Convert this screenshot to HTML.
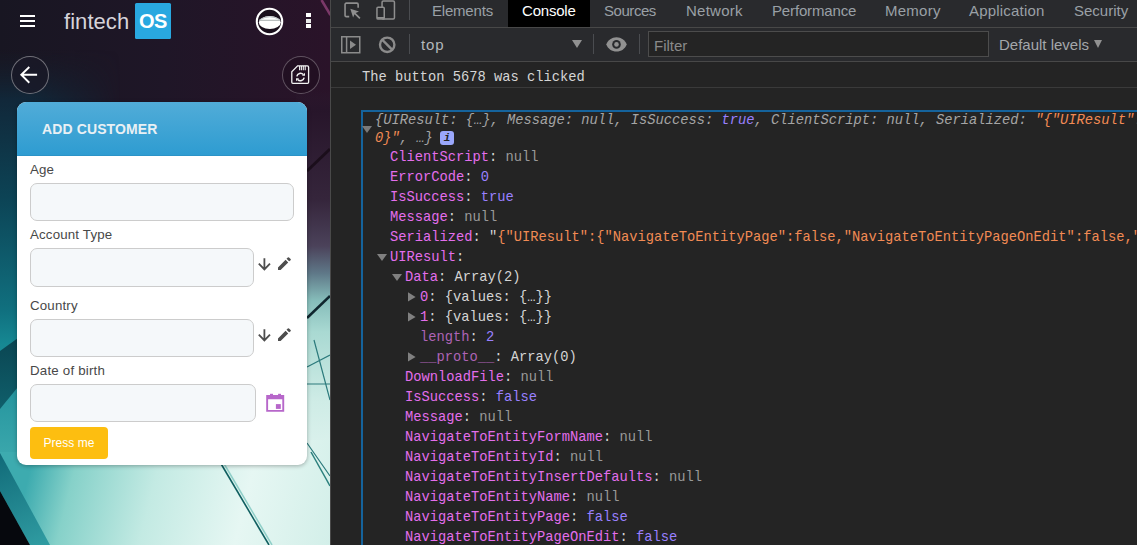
<!DOCTYPE html>
<html lang="en">
<head>
<meta charset="utf-8">
<title>Add Customer</title>
<style>
*{box-sizing:border-box;margin:0;padding:0}
html,body{width:1137px;height:545px;overflow:hidden;background:#242424}
body{position:relative;font-family:"Liberation Sans",sans-serif}
#app{position:absolute;left:0;top:0;width:330px;height:545px;overflow:hidden;background:#1b1622}
#bg{position:absolute;left:0;top:0}
.abs{position:absolute}
#logo-text{position:absolute;left:64px;top:9px;font-size:22px;color:#d6d3da;letter-spacing:.05px;line-height:26px}
#logo-os{position:absolute;left:135px;top:3px;width:36px;height:36px;border-radius:1.5px;background:#29a8e0;color:#fff;font-weight:bold;font-size:20px;letter-spacing:-.5px;line-height:37px;text-align:center}
.circ{position:absolute;width:38px;height:38px;border-radius:50%;border:1px solid rgba(255,255,255,.38);background:rgba(26,24,38,.7)}
#card{position:absolute;left:17px;top:102px;width:290px;height:363px;background:#fff;border-radius:9px;box-shadow:0 1px 4px rgba(0,0,0,.3);overflow:hidden}
#card-h{position:absolute;left:0;top:0;width:290px;height:54px;background:linear-gradient(#51acd8,#2e9cd1);border-bottom:1px solid #2b93c7;}
#card-h span{position:absolute;left:25px;top:19px;font-size:14px;font-weight:bold;color:#e9f0f4;letter-spacing:.12px;line-height:16px}
.lbl{position:absolute;left:13px;font-size:13.3px;letter-spacing:.17px;color:#484848;line-height:16px;white-space:nowrap}
.inp{position:absolute;left:13px;background:#f5f8fa;border:1px solid #ccc;border-radius:7px}
#btn{position:absolute;left:13px;top:325px;width:78px;height:32px;background:#fdbe10;border-radius:4px;color:#fff;font-size:12px;letter-spacing:.05px;line-height:32px;text-align:center}
#dt{position:absolute;left:332px;top:0;width:805px;height:545px;background:#242424}
#vb{position:absolute;left:330px;top:0;width:1px;height:545px;background:#494949}
#tabs{position:absolute;left:-1px;top:0;width:806px;height:28px;background:#292a2d;border-bottom:1px solid #484848}
#tabs>*,#tb2>*{margin-left:1px}
.tab{position:absolute;top:0;height:27px;line-height:22px;font-size:15px;letter-spacing:-.35px;color:#9aa0a6;white-space:nowrap}
#tb2{position:absolute;left:-1px;top:28px;width:806px;height:34px;background:#292a2d;border-bottom:1px solid #484848}
.mono{font-family:"Liberation Mono",monospace;font-size:13.75px;white-space:pre;position:absolute;line-height:20px;color:#d5d5d5}
.k{color:#e36eec}.kd{color:#ad63b5}.n{color:#9980ff}.z{color:#999}.s{color:#f28b54}
.it{font-style:italic;color:#a5a5a5}
.tt{font-size:15px;line-height:20px;white-space:nowrap}
</style>
</head>
<body>
<div id="app">
<svg id="bg" width="330" height="545" viewBox="0 0 330 545">
<defs>
<linearGradient id="g1" x1="0" y1="0" x2="1" y2="0"><stop offset="0" stop-color="#181622"/><stop offset=".5" stop-color="#1f1627"/><stop offset="1" stop-color="#2a1329"/></linearGradient>
<linearGradient id="gl" gradientUnits="userSpaceOnUse" x1="0" y1="50" x2="0" y2="470"><stop offset="0" stop-color="#16202e" stop-opacity="0"/><stop offset=".12" stop-color="#11283a"/><stop offset=".35" stop-color="#0c4355"/><stop offset=".62" stop-color="#10707f"/><stop offset=".7" stop-color="#168893"/><stop offset=".85" stop-color="#2b9aa2"/><stop offset="1" stop-color="#3fabaf"/></linearGradient>
<linearGradient id="glm" x1="0" y1="0" x2="1" y2="0"><stop offset="0" stop-color="#fff"/><stop offset=".25" stop-color="#fff"/><stop offset="1" stop-color="#000"/></linearGradient>
<mask id="ml"><rect x="0" y="40" width="120" height="505" fill="url(#glm)"/></mask>
<linearGradient id="gr" gradientUnits="userSpaceOnUse" x1="0" y1="90" x2="0" y2="480"><stop offset="0" stop-color="#2b1a2e" stop-opacity="0"/><stop offset=".05" stop-color="#27152a"/><stop offset=".28" stop-color="#35253b"/><stop offset=".4" stop-color="#4b425a"/><stop offset=".47" stop-color="#5f7888"/><stop offset=".54" stop-color="#86bdba"/><stop offset=".62" stop-color="#a9d9d2"/><stop offset=".8" stop-color="#cfece6"/><stop offset="1" stop-color="#e3f5f1"/></linearGradient>
<linearGradient id="gb" gradientUnits="userSpaceOnUse" x1="30" y1="470" x2="330" y2="545"><stop offset="0" stop-color="#3dabaf"/><stop offset=".14" stop-color="#86d1c9"/><stop offset=".4" stop-color="#c3eae3"/><stop offset=".7" stop-color="#e6f7f3"/><stop offset="1" stop-color="#d3efe9"/></linearGradient>
<linearGradient id="gdk" x1="0" y1="0" x2="0" y2="1"><stop offset="0" stop-color="#093f4c"/><stop offset="1" stop-color="#0f5f6b"/></linearGradient>
<linearGradient id="gband" gradientUnits="userSpaceOnUse" x1="0" y1="455" x2="40" y2="545"><stop offset="0" stop-color="#116b79"/><stop offset="1" stop-color="#2f9ba1"/></linearGradient>
</defs>
<rect width="330" height="545" fill="url(#g1)"/>
<rect x="0" y="40" width="120" height="505" fill="url(#gl)" mask="url(#ml)"/>
<polygon points="0,351 40,322 40,360 0,409" fill="url(#gdk)"/>
<rect x="296" y="90" width="34" height="455" fill="url(#gr)"/>
<polygon points="0,452 310,452 310,440 330,440 330,545 0,545" fill="url(#gb)"/>
<polygon points="0,453 0,491 30,545 50,545" fill="url(#gband)"/>
<polygon points="0,491 0,545 30,545" fill="#06080d"/>
<path d="M220 462L269 545" stroke="#0f5f60" stroke-width="1.600"/><path d="M223 462L272 545" stroke="#8fcfc8" stroke-width="1.500"/>
<path d="M311 452L330 486" stroke="#2a7f7c" stroke-width="1.500"/>
<path d="M307 171L330 149" stroke="#170b16" stroke-width="3" opacity=".8"/>
<path d="M307 318L330 296" stroke="#10262e" stroke-width="2.500"/>
<path d="M307 367L330 355M307 384L330 384M314 340L330 400M307 443L330 476" stroke="#2c7a7c" stroke-width="1.200" fill="none"/>
<path d="M321.500 0L330.500 15" stroke="#a64c8a" stroke-width="2.600" opacity=".65"/>
</svg>
<div class="abs" style="left:20px;top:15px;width:15px;height:2px;background:#fff"></div>
<div class="abs" style="left:20px;top:20px;width:15px;height:2px;background:#fff"></div>
<div class="abs" style="left:20px;top:25px;width:15px;height:2px;background:#fff"></div>
<div id="logo-text">fintech</div>
<div id="logo-os">OS</div>
<svg class="abs" style="left:254px;top:6px" width="31" height="31" viewBox="0 0 31 31"><circle cx="15.5" cy="15.5" r="12.7" fill="#1a0f1c" stroke="#fff" stroke-width="2.1"/><ellipse cx="15.8" cy="16.5" rx="11" ry="6.4" fill="#fff"/><path d="M5.6 14.2 Q15.8 8.5 26 14.2 L26 13.2 Q15.800 7.200 5.600 13.200z" fill="#b9c0c4"/><path d="M5.200 14.300h21.200" stroke="#aeb4b4" stroke-width="1.1"/></svg>
<div class="abs" style="left:306px;top:13px;width:5px;height:4px;background:#fff"></div>
<div class="abs" style="left:306px;top:18.500px;width:5px;height:4px;background:#e9e9e9"></div>
<div class="abs" style="left:306px;top:24px;width:5px;height:4px;background:#fff"></div>
<div class="circ" style="left:11px;top:56px"></div>
<svg class="abs" style="left:19px;top:65px" width="20" height="20" viewBox="0 0 20 20" fill="none" stroke="#fff" stroke-width="1.9" stroke-linecap="butt"><path d="M18.100 9.800H2.600M10.300 2L2.300 9.800l8 7.900"/></svg>
<div class="circ" style="left:281.500px;top:56px;border-color:rgba(255,255,255,.28);background:rgba(30,14,30,.6)"></div>
<svg class="abs" style="left:290px;top:64px" width="21" height="21" viewBox="0 0 21 21" fill="none" stroke="#f2f2f2" stroke-width="1.3"><path d="M7.600 1.900h9.700a1.300 1.300 0 0 1 1.300 1.300v15.100a1 1 0 0 1-1 1H2.800a1 1 0 0 1-1-1V7.800z"/><path d="M9.600 2v4.300M11.400 2v4.300M13.300 2v4.300M15.200 2v4.300" stroke-width="1.100"/><path d="M6.860 12.400A3.700 3.700 0 0 1 13.300 10.600M14.140 13.600A3.700 3.700 0 0 1 7.700 15.400" stroke-width="1.500"/><path d="M11.900 11.800h3.100v-3.100z" fill="#f2f2f2" stroke="none"/><path d="M9.100 14.200h-3.100v3.100z" fill="#f2f2f2" stroke="none"/></svg>
<div id="card">
<div id="card-h"><span>ADD CUSTOMER</span></div>
<div class="lbl" style="top:60px">Age</div>
<div class="inp" style="top:81px;width:264px;height:38px"></div>
<div class="lbl" style="top:125px">Account Type</div>
<div class="inp" style="top:146px;width:224px;height:39px"></div>
<svg class="abs ic" style="left:240px;top:155px" width="14" height="14" viewBox="0 0 14 14" fill="none" stroke="#4d4d4d" stroke-width="1.800"><path d="M7.400 1.200v11.300M1.800 6.700l5.600 5.800 5.600-5.800"/></svg>
<svg class="abs ic" style="left:260px;top:155px" width="15" height="14" viewBox="0 0 15 14"><path d="M1 10.400V13h2.600l7.600-7.600-2.600-2.600zM13.600 3.200a.9.900 0 0 0 0-1.200L12 .4a.900.900 0 0 0-1.200 0L9.500 1.700l2.600 2.600z" fill="#4d4d4d"/></svg>
<div class="lbl" style="top:196px">Country</div>
<div class="inp" style="top:217px;width:224px;height:38px"></div>
<svg class="abs ic" style="left:240px;top:226px" width="14" height="14" viewBox="0 0 14 14" fill="none" stroke="#4d4d4d" stroke-width="1.800"><path d="M7.400 1.200v11.300M1.800 6.700l5.600 5.800 5.600-5.800"/></svg>
<svg class="abs ic" style="left:260px;top:226px" width="15" height="14" viewBox="0 0 15 14"><path d="M1 10.400V13h2.600l7.600-7.600-2.600-2.600zM13.600 3.200a.9.900 0 0 0 0-1.200L12 .4a.900.900 0 0 0-1.200 0L9.500 1.700l2.600 2.600z" fill="#4d4d4d"/></svg>
<div class="lbl" style="top:261px;letter-spacing:.2px">Date of birth</div>
<div class="inp" style="top:282px;width:226px;height:38px"></div>
<svg class="abs" style="left:249px;top:291px" width="19" height="19" viewBox="0 0 19 19"><path d="M0.200 1.900h18v16.900h-18zM2.100 6.300v10.800h14.200V6.300z" fill="#b767ca" fill-rule="evenodd"/><rect x="4" y="0.800" width="3" height="1.200" fill="#b767ca"/><rect x="12.100" y="0.800" width="2.900" height="1.200" fill="#b767ca"/><rect x="9.900" y="11.100" width="4.900" height="4.800" fill="#b767ca"/></svg>
<div id="btn">Press me</div>
</div>
</div>
<div id="vb"></div>
<div id="dt">
<div id="tabs">
<svg class="abs" style="left:11px;top:1px" width="20" height="20" viewBox="0 0 20 20" fill="none" stroke="#8f8f8f" stroke-width="1.600"><path d="M15.150 6.700V3.400a1.250 1.250 0 0 0-1.250-1.250H3.300a1.250 1.250 0 0 0-1.250 1.250v11a1.250 1.250 0 0 0 1.250 1.250H6.200"/><path d="M7.300 7.700L16 10.600 12.700 12 17.500 16.800 16.300 18 11.500 13.200 10.100 16.500z" fill="#8f8f8f" stroke="none"/></svg>
<svg class="abs" style="left:43px;top:0" width="22" height="21" viewBox="0 0 22 21" fill="none" stroke="#8f8f8f" stroke-width="1.500"><rect x="7.050" y="1.050" width="12.400" height="18" rx="1.200"/><rect x="1.950" y="7.150" width="7.300" height="11.900" rx="1.100" fill="#292a2d"/><path d="M2 17.900h7.200" stroke-width="1.800"/></svg>
<div class="abs" style="left:77px;top:0;width:1px;height:20px;background:#4a4c50"></div>
<div class="tab" style="left:100px;letter-spacing:-.2px">Elements</div>
<div class="tab" style="left:176px;width:82px;background:#000;color:#fff;padding-left:14px;letter-spacing:-.2px">Console</div>
<div class="tab" style="left:272px;letter-spacing:-.45px">Sources</div>
<div class="tab" style="left:354px;letter-spacing:.25px">Network</div>
<div class="tab" style="left:440px;letter-spacing:-.15px">Performance</div>
<div class="tab" style="left:553px;letter-spacing:.25px">Memory</div>
<div class="tab" style="left:637px;letter-spacing:.2px">Application</div>
<div class="tab" style="left:742px;letter-spacing:0">Security</div>
</div>
<div id="tb2">
<svg class="abs" style="left:9px;top:8px" width="20" height="18" viewBox="0 0 20 18" fill="none" stroke="#8b8b8b" stroke-width="1.5"><rect x="0.75" y="0.75" width="18" height="16"/><path d="M5.6 0.75v16"/><path d="M9 4.6l6 4.2-6 4.2z" fill="#8b8b8b" stroke="none"/></svg>
<svg class="abs" style="left:46px;top:8px" width="18" height="18" viewBox="0 0 18 18" fill="none" stroke="#8b8b8b" stroke-width="2.400"><circle cx="9.200" cy="8.800" r="7.200"/><path d="M4.100 3.700l10.200 10.200"/></svg>
<div class="abs" style="left:77px;top:6px;width:1px;height:20px;background:#4a4c50"></div>
<div class="abs tt" style="left:89px;top:7px;color:#b4b7bb;letter-spacing:.9px">top</div>
<svg class="abs" style="left:240px;top:12px" width="10" height="8" viewBox="0 0 10 8"><polygon points="0,0 10,0 5,8" fill="#919191"/></svg>
<div class="abs" style="left:261px;top:6px;width:1px;height:20px;background:#4a4c50"></div>
<svg class="abs" style="left:274px;top:9px" width="21" height="15" viewBox="0 0 21 15"><path d="M10.5 0.3C5.8 0.3 1.9 3.2 0.3 7.4c1.6 4.2 5.5 7.1 10.2 7.1s8.600-2.900 10.200-7.100C19.100 3.200 15.200 0.300 10.500 0.300z" fill="#919191"/><circle cx="10.500" cy="7.400" r="4.3" fill="#292a2d"/><circle cx="10.500" cy="7.400" r="2.300" fill="#919191"/></svg>
<div class="abs" style="left:307px;top:6px;width:1px;height:20px;background:#4a4c50"></div>
<div class="abs" style="left:316px;top:3px;width:341px;height:26px;background:#242424;border:1px solid #4c4c4c"></div>
<div class="abs tt" style="left:322px;top:8px;color:#8a8a8a">Filter</div>
<div class="abs tt" style="left:667px;top:7px;color:#a4a7ab">Default levels</div>
<svg class="abs" style="left:762px;top:12px" width="8" height="8" viewBox="0 0 8 8"><polygon points="0,0 8,0 4,8" fill="#919191"/></svg>
</div>
<div class="abs" style="left:-1px;top:87px;width:806px;height:1px;background:#3a3a3a"></div>
<div class="mono" style="left:30px;top:68px">The button 5678 was clicked</div>
<div class="abs" style="left:29px;top:110px;width:900px;height:500px;border:2px solid #15639c"></div>
<svg class="abs" style="left:30px;top:126px" width="10" height="7" viewBox="0 0 10 7"><polygon points="0,0 10,0 5,7" fill="#7a7a7a"/></svg>
<div class="mono" style="left:43px;top:111px"><span class="it">{UIResult: {…}, Message: null, IsSuccess: <span class="n">true</span>, ClientScript: null, Serialized: <span class="s">"{"UIResult":{"NavigateToEntityPage":false</span></span></div>
<div class="mono" style="left:43px;top:129px"><span class="it"><span class="s">0}"</span>, …}</span></div>
<div class="abs" style="left:108px;top:131px;width:14px;height:14px;border-radius:3px;background:#9aa7fb;color:#242424;font:italic bold 11px/14px 'Liberation Mono',monospace;text-align:center">i</div>
<div class="mono" style="left:58px;top:148px"><span class="k">ClientScript</span>: <span class="z">null</span></div>
<div class="mono" style="left:58px;top:168px"><span class="k">ErrorCode</span>: <span class="n">0</span></div>
<div class="mono" style="left:58px;top:188px"><span class="k">IsSuccess</span>: <span class="n">true</span></div>
<div class="mono" style="left:58px;top:208px"><span class="k">Message</span>: <span class="z">null</span></div>
<div class="mono" style="left:58px;top:228px"><span class="k">Serialized</span>: "<span class="s">{"UIResult":{"NavigateToEntityPage":false,"NavigateToEntityPageOnEdit":false,"NavigateToEntityName":null</span></div>
<div class="mono" style="left:58px;top:248px"><span class="k">UIResult</span>:</div>
<svg class="abs" style="left:45px;top:254px" width="10" height="7" viewBox="0 0 10 7"><polygon points="0,0 10,0 5,7" fill="#808080"/></svg>
<div class="mono" style="left:73px;top:268px"><span class="k">Data</span>: Array(2)</div>
<svg class="abs" style="left:60px;top:274px" width="10" height="7" viewBox="0 0 10 7"><polygon points="0,0 10,0 5,7" fill="#808080"/></svg>
<div class="mono" style="left:88px;top:288px"><span class="k">0</span>: {values: {…}}</div>
<svg class="abs" style="left:76px;top:292px" width="8" height="10" viewBox="0 0 8 10"><polygon points="0,0.2 7.6,4.9 0,9.6" fill="#808080"/></svg>
<div class="mono" style="left:88px;top:308px"><span class="k">1</span>: {values: {…}}</div>
<svg class="abs" style="left:76px;top:312px" width="8" height="10" viewBox="0 0 8 10"><polygon points="0,0.2 7.6,4.9 0,9.6" fill="#808080"/></svg>
<div class="mono" style="left:88px;top:328px"><span class="kd">length</span>: <span class="n">2</span></div>
<div class="mono" style="left:88px;top:348px"><span class="kd">__proto__</span>: Array(0)</div>
<svg class="abs" style="left:76px;top:352px" width="8" height="10" viewBox="0 0 8 10"><polygon points="0,0.2 7.6,4.9 0,9.6" fill="#808080"/></svg>
<div class="mono" style="left:73px;top:368px"><span class="k">DownloadFile</span>: <span class="z">null</span></div>
<div class="mono" style="left:73px;top:388px"><span class="k">IsSuccess</span>: <span class="n">false</span></div>
<div class="mono" style="left:73px;top:408px"><span class="k">Message</span>: <span class="z">null</span></div>
<div class="mono" style="left:73px;top:428px"><span class="k">NavigateToEntityFormName</span>: <span class="z">null</span></div>
<div class="mono" style="left:73px;top:448px"><span class="k">NavigateToEntityId</span>: <span class="z">null</span></div>
<div class="mono" style="left:73px;top:468px"><span class="k">NavigateToEntityInsertDefaults</span>: <span class="z">null</span></div>
<div class="mono" style="left:73px;top:488px"><span class="k">NavigateToEntityName</span>: <span class="z">null</span></div>
<div class="mono" style="left:73px;top:508px"><span class="k">NavigateToEntityPage</span>: <span class="n">false</span></div>
<div class="mono" style="left:73px;top:528px"><span class="k">NavigateToEntityPageOnEdit</span>: <span class="n">false</span></div>
</div>
</body>
</html>
